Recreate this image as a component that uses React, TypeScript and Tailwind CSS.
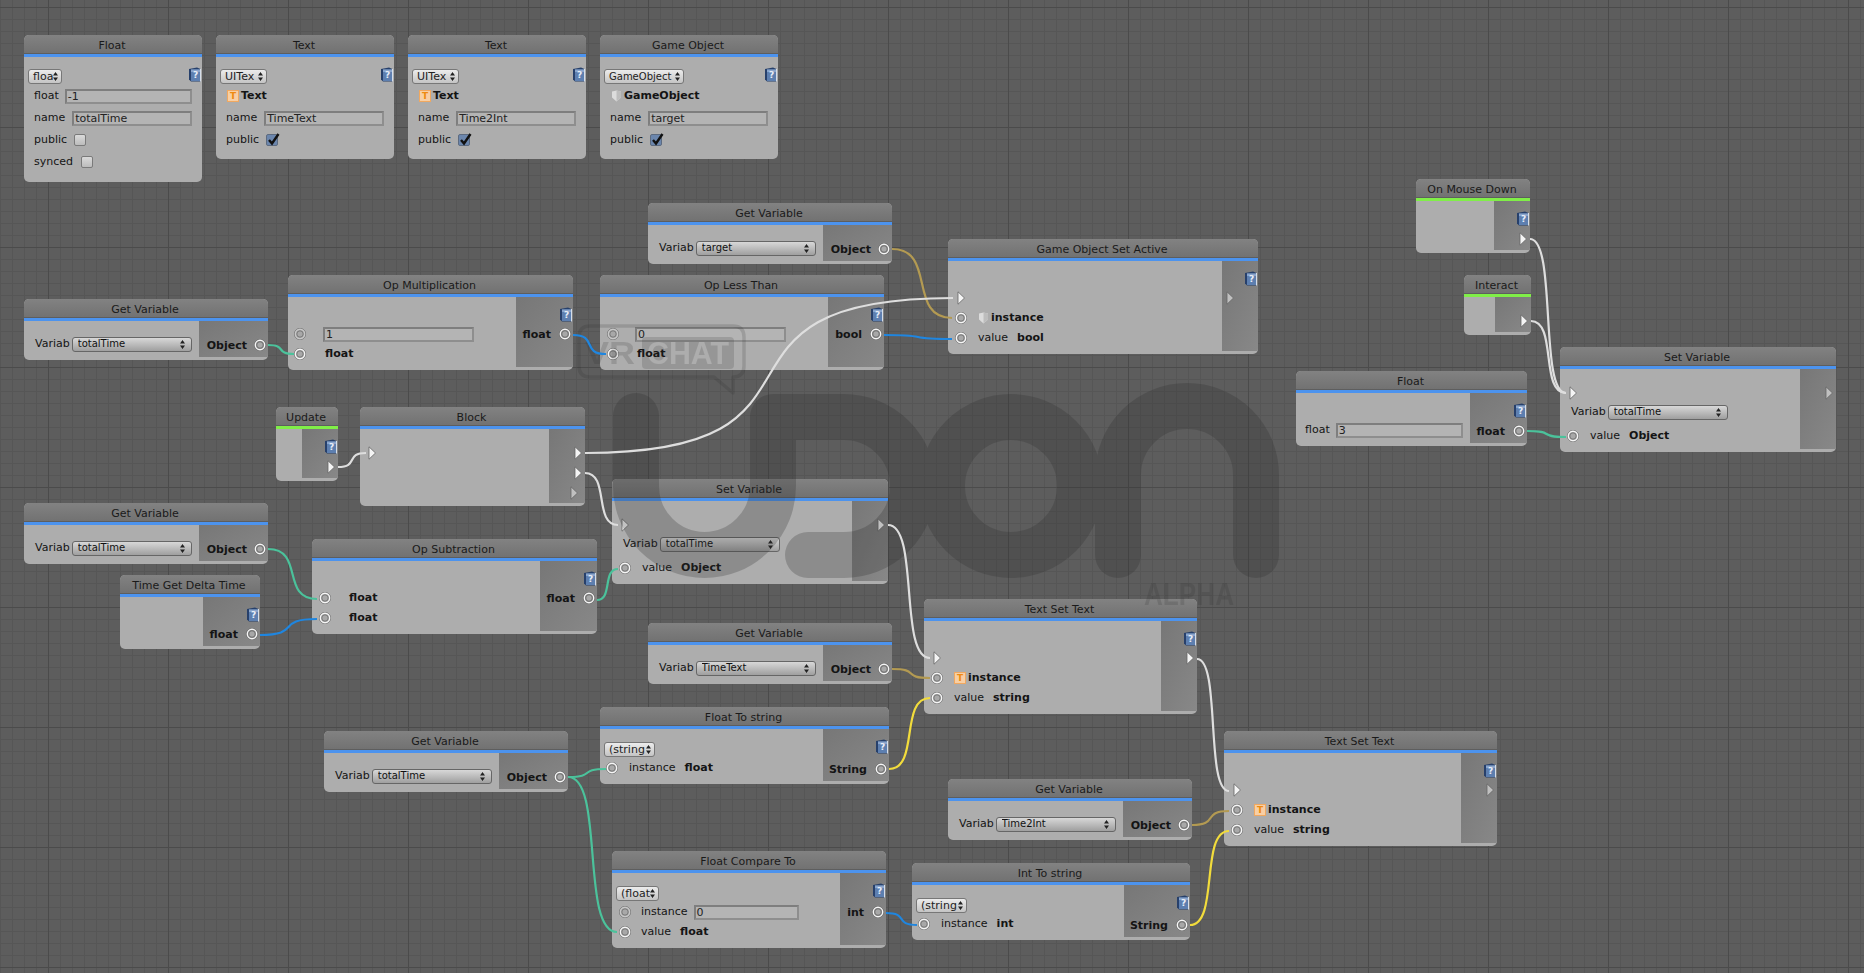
import type { ReactNode } from 'react';

const WHITE = '#dedede';
const TEAL = '#4bc29b';
const BLUE = '#1f86e0';
const GOLD = '#b39a52';
const YELLOW = '#f2dc3c';

// [x1, y1, x2, y2, colour]
const wires: [number, number, number, number, string][] = [
  [268, 345, 294, 354, TEAL],
  [573, 335, 606, 354, BLUE],
  [892, 249, 952, 318, GOLD],
  [884, 335, 952, 339, BLUE],
  [585, 453, 953, 298, WHITE],
  [585, 473, 618, 525, WHITE],
  [338, 467, 366, 453, WHITE],
  [268, 549, 317, 599, TEAL],
  [260, 635, 317, 619, BLUE],
  [597, 600, 618, 569, TEAL],
  [888, 525, 930, 658, WHITE],
  [892, 669, 930, 678, GOLD],
  [889, 769, 930, 698, YELLOW],
  [1197, 659, 1229, 791, WHITE],
  [1192, 825, 1229, 811, GOLD],
  [1190, 925, 1229, 831, YELLOW],
  [568, 777, 606, 769, TEAL],
  [568, 777, 617, 932, TEAL],
  [886, 913, 917, 925, BLUE],
  [1530, 239, 1566, 393, WHITE],
  [1531, 321, 1566, 393, WHITE],
  [1527, 431, 1566, 437, TEAL],
];

function wirePath(x1: number, y1: number, x2: number, y2: number) {
  const t = (x2 - x1) * 0.75;
  return `M${x1} ${y1} C${x1 + t} ${y1} ${x2 - t} ${y2} ${x2} ${y2}`;
}

function Help() {
  return (
    <svg width="13" height="15" viewBox="0 0 13 15" className="absolute right-[1px] top-[32px]">
      <path d="M1 2 L9 0.5 L12.5 2 L12.5 14.5 L3 14.5 L1 12.5 Z" fill="#27406b" />
      <path d="M3 2.5 H12 V14 H3 Z" fill="#5d7fb0" />
      <path d="M3 2.5 H12 V5 H3 Z" fill="#8aa5cc" />
      <path d="M12 2 H13 V14.5 H12 Z" fill="#d5dde8" />
      <text x="7.5" y="11" fontSize="9" fontWeight="700" textAnchor="middle" fill="#e8eef8" fontFamily="'DejaVu Sans', sans-serif">?</text>
    </svg>
  );
}

function Port({ on = false }: { on?: boolean }) {
  return (
    <svg width="12" height="12" viewBox="0 0 12 12" className="shrink-0">
      <circle cx="6" cy="6" r="5.6" fill="none" stroke="#6a6a6a" strokeWidth="0.8" />
      <circle cx="6" cy="6" r="4.7" fill="none" stroke={on ? '#f6f6f6' : '#c8c8c8'} strokeWidth="1.4" />
      <circle cx="6" cy="6" r="3.2" fill="#a8a8a8" stroke="#6c6c6c" strokeWidth="0.8" />
    </svg>
  );
}

function Exec({ on = false }: { on?: boolean }) {
  return (
    <svg width="12" height="14" viewBox="0 0 12 14" className="shrink-0">
      <path d="M3 0.8 L9.5 7 L3 13.2 Z" fill={on ? '#f4f4f4' : '#c0c0c0'} stroke="#666" strokeWidth="0.8" />
    </svg>
  );
}

function Arrows() {
  return (
    <svg width="5" height="9" viewBox="0 0 5 9" className="shrink-0">
      <path d="M2.5 0 L5 3.5 H0 Z M2.5 9 L5 5.5 H0 Z" fill="#222" />
    </svg>
  );
}

function Select({ label, w }: { label: string; w: string }) {
  return (
    <div className={`${w} ml-[2px] flex h-[15px] items-center rounded-[3px] border border-[#666] bg-gradient-to-b from-[#d8d8d8] to-[#9f9f9f] pl-[5px] pr-[6px]`}>
      <span className="flex-1 overflow-hidden whitespace-nowrap text-[10px] leading-none text-[#111]">{label}</span>
      <Arrows />
    </div>
  );
}

function Pick({ label, w }: { label: string; w: string }) {
  return (
    <div className={`${w} flex h-[15px] items-center rounded-[3px] border border-[#777] bg-gradient-to-b from-[#ececec] to-[#c4c4c4] pl-[4px] pr-[3px]`}>
      <span className="flex-1 whitespace-nowrap leading-none text-[#222]">{label}</span>
      <Arrows />
    </div>
  );
}

function Field({ value, w, ml }: { value: string; w: string; ml: string }) {
  return (
    <div className={`${w} ${ml} flex h-[15px] items-center border-2 border-[#7e7e7e] border-b-[#8e8e8e] border-r-[#8e8e8e] bg-[#b4b4b4] pl-[1px] leading-none text-[#222]`}>
      {value}
    </div>
  );
}

function Check({ on = false, ml }: { on?: boolean; ml: string }) {
  if (on) {
    return (
      <div className={`${ml} relative h-[12px] w-[12px] rounded-[2px] border border-[#5d6b80] bg-[#6b86ad]`}>
        <svg width="14" height="14" viewBox="0 0 14 14" className="absolute -top-[3px] left-0">
          <path d="M2 8 L5 11.5 L11.5 2" fill="none" stroke="#111" strokeWidth="2.4" />
        </svg>
      </div>
    );
  }
  return <div className={`${ml} h-[12px] w-[12px] rounded-[2px] border border-[#7a7a7a] bg-gradient-to-b from-[#dadada] to-[#bcbcbc]`} />;
}

function TextIcon() {
  return (
    <span className="flex h-[12px] w-[12px] shrink-0 items-center justify-center border border-[#f0a860] bg-[#f8cfa4] text-[9px] font-bold leading-none text-[#ee8a10]">
      T
    </span>
  );
}

function CubeIcon() {
  return (
    <svg width="11" height="12" viewBox="0 0 11 12" className="shrink-0">
      <path d="M1 1.5 L5.5 0.5 L10 1.5 V7.5 L5.5 11.5 L1 7.5 Z" fill="#dcdcdc" />
      <path d="M5.5 0.5 L10 1.5 V7.5 L5.5 11.5 Z" fill="#bdbdbd" />
    </svg>
  );
}

function Row({ h = 'h-5', children, className = '' }: { h?: string; children?: ReactNode; className?: string }) {
  return <div className={`${h} flex items-center whitespace-nowrap ${className}`}>{children}</div>;
}

function Out({ type, on = true, gap = 'gap-[7px]' }: { type: string; on?: boolean; gap?: string }) {
  return (
    <Row className={`justify-end pr-[2px] ${gap}`}>
      <b className="pt-[2px] font-bold">{type}</b>
      <Port on={on} />
    </Row>
  );
}

interface NodeProps {
  x: number;
  y: number;
  w: number;
  h: number;
  title: string;
  panel?: number;
  event?: boolean;
  help?: boolean;
  pad?: string;
  rightPad?: string;
  children?: ReactNode;
  right?: ReactNode;
}

function Node({ x, y, w, h, title, panel, event, help, pad = 'pt-[14px]', rightPad = 'pt-[14px]', children, right }: NodeProps) {
  return (
    <div
      className="absolute flex flex-col overflow-hidden rounded-[5px] bg-[#adadad] font-['DejaVu_Sans',sans-serif] text-[11px] text-[#141414]"
      style={{ left: x, top: y, width: w, height: h }}
    >
      <div className="flex h-[19px] shrink-0 items-center justify-center border-b border-[#5e5e5e] bg-gradient-to-b from-[#828282] to-[#727272] pr-[2px] pt-[5px] text-[#1a1a1a]">
        {title}
      </div>
      <div className={`h-[3px] shrink-0 ${event ? 'bg-[#80ee48]' : 'bg-[#4c93ee]'}`} />
      <div className="flex min-h-0 flex-1">
        <div className={`min-w-0 flex-1 ${pad}`}>{children}</div>
        {panel !== undefined && (
          <div
            className={`mb-[3px] shrink-0 bg-gradient-to-br from-[#777777] to-[#888888] ${rightPad}`}
            style={{ width: x + w - panel }}
          >
            {right}
          </div>
        )}
      </div>
      {help && <Help />}
    </div>
  );
}

function GetVariable({ x, y, name }: { x: number; y: number; name: string }) {
  return (
    <Node x={x} y={y} w={244} h={61} title="Get Variable" panel={x + 175} pad="pt-[13px]" right={<Out type="Object" on />}>
      <Row className="pl-[11px]">
        Variab
        <Select label={name} w="w-[120px]" />
      </Row>
    </Node>
  );
}

function SetVariable({ x, y, on, outOn }: { x: number; y: number; on: boolean; outOn: boolean }) {
  return (
    <Node
      x={x}
      y={y}
      w={276}
      h={105}
      title="Set Variable"
      panel={x + 240}
      right={
        <Row className="justify-end pr-[1px]">
          <Exec on={outOn} />
        </Row>
      }
    >
      <Row className="pl-[7px]">
        <Exec on={on} />
      </Row>
      <Row h="h-[18px]" className="pl-[11px]">
        Variab
        <Select label="totalTime" w="w-[120px]" />
      </Row>
      <Row h="h-[30px]" className="pl-[7px]">
        <Port on />
        <span className="ml-[11px]">value</span>
        <b className="ml-[9px]">Object</b>
      </Row>
    </Node>
  );
}

function TextSetText({ x, y, outOn }: { x: number; y: number; outOn: boolean }) {
  return (
    <Node
      x={x}
      y={y}
      w={273}
      h={115}
      title="Text Set Text"
      panel={x + 237}
      help
      pad="pt-[27px]"
      rightPad="pt-[27px]"
      right={
        <Row className="justify-end pr-[1px]">
          <Exec on={outOn} />
        </Row>
      }
    >
      <Row className="pl-[7px]">
        <Exec on />
      </Row>
      <Row className="pl-[7px]">
        <Port on />
        <span className="ml-[11px]"><TextIcon /></span>
        <b className="ml-[2px]">instance</b>
      </Row>
      <Row className="pl-[7px]">
        <Port on />
        <span className="ml-[11px]">value</span>
        <b className="ml-[9px]">string</b>
      </Row>
    </Node>
  );
}

function VarRows({ children }: { children: ReactNode }) {
  return <div className="flex flex-col">{children}</div>;
}

function TextVar({ x, label, name }: { x: number; label: string; name: string }) {
  return (
    <Node x={x} y={35} w={178} h={124} title="Text" help pad="pt-[11px]">
      <VarRows>
        <Row h="h-[17px]" className="pl-[4px]">
          <Pick label="UITex" w="w-[47px]" />
        </Row>
        <Row h="h-[22px]" className="pl-[11px]">
          <TextIcon />
          <b className="ml-[2px]">{label}</b>
        </Row>
        <Row h="h-[22px]" className="pl-[10px]">
          name
          <Field value={name} w="w-[120px]" ml="ml-[7px]" />
        </Row>
        <Row h="h-[22px]" className="pl-[10px]">
          public
          <Check on ml="ml-[7px]" />
        </Row>
      </VarRows>
    </Node>
  );
}

function Watermark() {
  return (
    <svg width="1864" height="973" viewBox="0 0 1864 973" className="pointer-events-none absolute left-0 top-0">
      <g opacity="0.25" fill="none" stroke="#2c2c2c" strokeWidth="46" strokeLinecap="round" strokeLinejoin="round">
        <path d="M636 416 V486 A68.5 69 0 0 0 773 486 V417 H844 A69 69 0 0 1 844 555 H808" />
        <circle cx="1011" cy="486" r="69" />
        <path d="M1118 555 V475 A69 69 0 0 1 1256 475 V555" />
      </g>
      <text
        x="1144"
        y="605"
        fontSize="32"
        fontWeight="700"
        textLength="90"
        lengthAdjust="spacingAndGlyphs"
        fontFamily="'Liberation Sans', sans-serif"
        fill="#2c2c2c"
        opacity="0.17"
      >
        ALPHA
      </text>
      <defs>
        <mask id="chat-cut">
          <rect x="640" y="330" width="100" height="45" fill="white" />
          <text
            x="647"
            y="364"
            fontSize="32"
            fontWeight="700"
            textLength="82"
            lengthAdjust="spacingAndGlyphs"
            fontFamily="'Liberation Sans', sans-serif"
            fill="black"
          >
            CHAT
          </text>
        </mask>
      </defs>
      <g opacity="0.17">
        <path
          d="M590 326 H733 Q744 326 744 337 V366 Q744 377 733 377 V393 L714 377 H590 Q579 377 579 366 V337 Q579 326 590 326 Z"
          fill="none"
          stroke="#2c2c2c"
          strokeWidth="3.5"
          strokeLinejoin="round"
        />
        <text
          x="585"
          y="364"
          fontSize="32"
          fontWeight="700"
          textLength="50"
          lengthAdjust="spacingAndGlyphs"
          fontFamily="'Liberation Sans', sans-serif"
          fill="#2c2c2c"
        >
          VR
        </text>
        <rect x="642" y="337" width="92" height="32" rx="4" fill="#2c2c2c" mask="url(#chat-cut)" />
      </g>
    </svg>
  );
}

export default function App() {
  return (
    <div className="relative h-[973px] w-[1864px] overflow-hidden bg-[#5d5d5d] bg-[linear-gradient(#4b4b4b_1px,transparent_1px),linear-gradient(90deg,#4b4b4b_1px,transparent_1px),linear-gradient(#565656_1px,transparent_1px),linear-gradient(90deg,#565656_1px,transparent_1px)] [background-position:0_7px,48px_0,0_7px,0_0] [background-size:120px_120px,120px_120px,12px_12px,12px_12px]">
      <Node x={24} y={35} w={178} h={147} title="Float" help pad="pt-[11px]">
        <VarRows>
          <Row h="h-[17px]" className="pl-[4px]">
            <Pick label="floa" w="w-[34px]" />
          </Row>
          <Row h="h-[22px]" className="pl-[10px]">
            float
            <Field value="-1" w="w-[127px]" ml="ml-[6px]" />
          </Row>
          <Row h="h-[22px]" className="pl-[10px]">
            name
            <Field value="totalTime" w="w-[120px]" ml="ml-[7px]" />
          </Row>
          <Row h="h-[22px]" className="pl-[10px]">
            public
            <Check ml="ml-[7px]" />
          </Row>
          <Row h="h-[22px]" className="pl-[10px]">
            synced
            <Check ml="ml-[8px]" />
          </Row>
        </VarRows>
      </Node>
      <TextVar x={216} label="Text" name="TimeText" />
      <TextVar x={408} label="Text" name="Time2Int" />
      <Node x={600} y={35} w={178} h={124} title="Game Object" help pad="pt-[11px]">
        <VarRows>
          <Row h="h-[17px]" className="pl-[4px]">
            <div className="flex h-[15px] w-[80px] items-center rounded-[3px] border border-[#777] bg-gradient-to-b from-[#ececec] to-[#c4c4c4] pl-[4px] pr-[3px]">
              <span className="flex-1 text-[10px] leading-none text-[#222]">GameObject</span>
              <Arrows />
            </div>
          </Row>
          <Row h="h-[22px]" className="pl-[11px]">
            <CubeIcon />
            <b className="ml-[2px]">GameObject</b>
          </Row>
          <Row h="h-[22px]" className="pl-[10px]">
            name
            <Field value="target" w="w-[120px]" ml="ml-[7px]" />
          </Row>
          <Row h="h-[22px]" className="pl-[10px]">
            public
            <Check on ml="ml-[7px]" />
          </Row>
        </VarRows>
      </Node>

      <GetVariable x={648} y={203} name="target" />
      <GetVariable x={24} y={299} name="totalTime" />
      <GetVariable x={24} y={503} name="totalTime" />
      <GetVariable x={648} y={623} name="TimeText" />
      <GetVariable x={948} y={779} name="Time2Int" />
      <GetVariable x={324} y={731} name="totalTime" />

      <Node x={288} y={275} w={285} h={95} title="Op Multiplication" panel={516} help pad="pt-[27px]" rightPad="pt-[27px]" right={<Out type="float" gap="gap-[8px]" />}>
        <Row className="pl-[6px]">
          <Port />
          <Field value="1" w="w-[151px]" ml="ml-[17px]" />
        </Row>
        <Row className="pl-[6px]">
          <Port on />
          <b className="ml-[19px]">float</b>
        </Row>
      </Node>
      <Node x={600} y={275} w={284} h={95} title="Op Less Than" panel={828} help pad="pt-[27px]" rightPad="pt-[27px]" right={<Out type="bool" gap="gap-[8px]" />}>
        <Row className="pl-[7px]">
          <Port />
          <Field value="0" w="w-[151px]" ml="ml-[16px]" />
        </Row>
        <Row className="pl-[7px]">
          <Port on />
          <b className="ml-[18px]">float</b>
        </Row>
      </Node>
      <Node
        x={948}
        y={239}
        w={310}
        h={115}
        title="Game Object Set Active"
        panel={1222}
        help
        pad="pt-[27px]"
        rightPad="pt-[27px]"
        right={
          <Row className="justify-end pr-[22px]">
            <Exec />
          </Row>
        }
      >
        <Row className="pl-[7px]">
          <Exec on />
        </Row>
        <Row className="pl-[7px]">
          <Port on />
          <span className="ml-[11px]"><CubeIcon /></span>
          <b className="ml-[2px]">instance</b>
        </Row>
        <Row className="pl-[7px]">
          <Port on />
          <span className="ml-[11px]">value</span>
          <b className="ml-[9px]">bool</b>
        </Row>
      </Node>

      <Node x={276} y={407} w={62} h={74} title="Update" panel={302} event help rightPad="pt-[28px]" right={<Row className="justify-end pr-[1px]"><Exec on /></Row>} />
      <Node
        x={360}
        y={407}
        w={225}
        h={99}
        title="Block"
        panel={549}
        right={
          <>
            <Row className="justify-end pr-[1px]"><Exec on /></Row>
            <Row className="justify-end pr-[1px]"><Exec on /></Row>
            <Row className="justify-end pr-[5px]"><Exec /></Row>
          </>
        }
      >
        <Row className="pl-[6px]">
          <Exec on />
        </Row>
      </Node>

      <SetVariable x={612} y={479} on outOn />
      <SetVariable x={1560} y={347} on outOn={false} />

      <Node x={312} y={539} w={285} h={95} title="Op Subtraction" panel={540} help pad="pt-[27px]" rightPad="pt-[27px]" right={<Out type="float" gap="gap-[8px]" />}>
        <Row className="pl-[7px]">
          <Port on />
          <b className="ml-[18px]">float</b>
        </Row>
        <Row className="pl-[7px]">
          <Port on />
          <b className="ml-[18px]">float</b>
        </Row>
      </Node>
      <Node x={120} y={575} w={140} h={74} title="Time Get Delta Time" panel={203} help rightPad="pt-[27px]" right={<Out type="float" gap="gap-[8px]" />} />

      <Node x={600} y={707} w={289} h={77} title="Float To string" panel={823} help pad="pt-[11px]" rightPad="pt-[30px]" right={<Out type="String" gap="gap-[8px]" />}>
        <Row h="h-[18px]" className="pl-[4px]">
          <Pick label="(string" w="w-[51px]" />
        </Row>
        <Row className="pl-[6px]">
          <Port on />
          <span className="ml-[11px]">instance</span>
          <b className="ml-[9px]">float</b>
        </Row>
      </Node>
      <Node x={612} y={851} w={274} h={97} title="Float Compare To" panel={840} help pad="pt-[11px]" rightPad="pt-[29px]" right={<Out type="int" gap="gap-[8px]" />}>
        <Row h="h-[18px]" className="pl-[4px]">
          <Pick label="(float" w="w-[43px]" />
        </Row>
        <Row className="pl-[7px]">
          <Port />
          <span className="ml-[10px]">instance</span>
          <Field value="0" w="w-[105px]" ml="ml-[6px]" />
        </Row>
        <Row className="pl-[7px]">
          <Port on />
          <span className="ml-[10px]">value</span>
          <b className="ml-[9px]">float</b>
        </Row>
      </Node>
      <Node x={912} y={863} w={278} h={77} title="Int To string" panel={1124} help pad="pt-[11px]" rightPad="pt-[30px]" right={<Out type="String" gap="gap-[8px]" />}>
        <Row h="h-[18px]" className="pl-[4px]">
          <Pick label="(string" w="w-[51px]" />
        </Row>
        <Row className="pl-[6px]">
          <Port on />
          <span className="ml-[11px]">instance</span>
          <b className="ml-[9px]">int</b>
        </Row>
      </Node>

      <TextSetText x={924} y={599} outOn />
      <TextSetText x={1224} y={731} outOn={false} />

      <Node x={1416} y={179} w={114} h={74} title="On Mouse Down" panel={1494} event help rightPad="pt-[28px]" right={<Row className="justify-end pr-[1px]"><Exec on /></Row>} />
      <Node x={1464} y={275} w={67} h={60} title="Interact" panel={1495} event right={<Row className="justify-end pr-[1px]"><Exec on /></Row>} />
      <Node x={1296} y={371} w={231} h={75} title="Float" panel={1470} help pad="pt-[27px]" rightPad="pt-[28px]" right={<Out type="float" gap="gap-[8px]" />}>
        <Row className="pl-[9px]">
          float
          <Field value="3" w="w-[127px]" ml="ml-[6px]" />
        </Row>
      </Node>

      <Watermark />

      <svg width="1864" height="973" viewBox="0 0 1864 973" className="pointer-events-none absolute left-0 top-0">
        {wires.map(([x1, y1, x2, y2, color], i) => (
          <path key={i} d={wirePath(x1, y1, x2, y2)} fill="none" stroke={color} strokeWidth="2.2" />
        ))}
      </svg>
    </div>
  );
}
